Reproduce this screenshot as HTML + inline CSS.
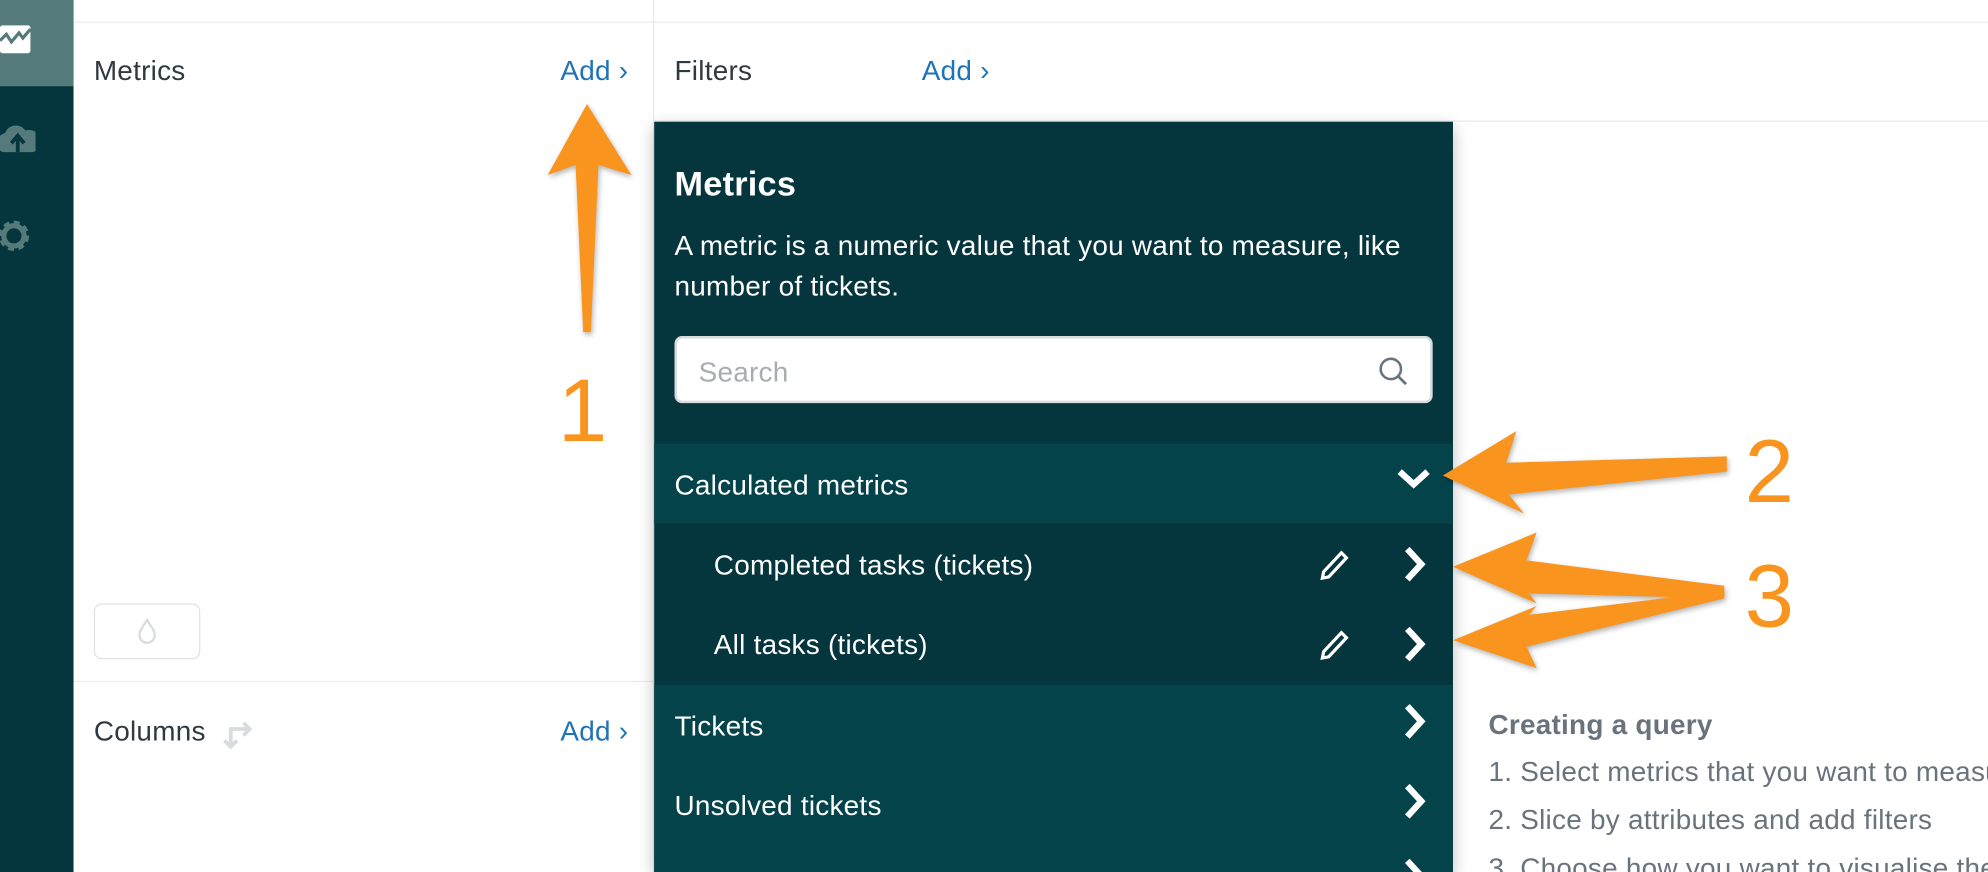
<!DOCTYPE html>
<html><head><meta charset="utf-8"><style>
html,body{margin:0;padding:0;width:1988px;height:872px;overflow:hidden;background:#fff}
#w{position:absolute;left:0;top:0;width:1568px;height:688px;transform:scale(1.26786);transform-origin:0 0;font-family:"Liberation Sans",sans-serif;overflow:hidden}
.a{position:absolute}
.t{position:absolute;white-space:nowrap;font-size:22px;line-height:24px;letter-spacing:0.2px}
.blue{color:#1f73b7}
.row{position:absolute;left:516px;width:630px}
</style></head><body><div id="w">
<div class="a" style="left:0;top:0;width:58px;height:688px;background:#05363d"></div>
<div class="a" style="left:0;top:0;width:58px;height:68px;background:#557a7b"></div>
<svg class="a" style="left:0;top:18px" width="26" height="26" viewBox="0 0 26 26"><rect x="0" y="2" width="24" height="22" rx="2" fill="#fff"/><path d="M0 14 L5 9 L9 15 L15 8 L18 12 L24 5" stroke="#557a7b" stroke-width="2.5" fill="none"/></svg>
<svg class="a" style="left:0;top:94px" width="28" height="28" viewBox="0 0 28 28"><path d="M2 26 A8 8 0 0 1 4 11 A9 9 0 0 1 20 9 A8 8 0 0 1 26 26 Z" fill="#557a7b"/><path d="M14 26 V14 M9 19 L14 13 L19 19" stroke="#05363d" stroke-width="3" fill="none"/></svg>
<svg class="a" style="left:0;top:172px" width="26" height="28" viewBox="0 0 26 28"><circle cx="11" cy="14" r="9" fill="none" stroke="#557a7b" stroke-width="6" stroke-dasharray="4 3"/><circle cx="11" cy="14" r="8" fill="none" stroke="#557a7b" stroke-width="4"/></svg>
<div class="a" style="left:58px;top:17px;width:1510px;height:1px;background:#e9ebed"></div>
<div class="a" style="left:515px;top:0;width:1px;height:688px;background:#e9ebed"></div>
<div class="t" style="left:74px;top:44px;color:#2f3941">Metrics</div>
<div class="t blue" style="left:442px;top:44px">Add ›</div>
<div class="a" style="left:74px;top:476px;width:84px;height:44px;border:1px solid #e0e3e5;border-radius:6px;box-sizing:border-box"></div>
<svg class="a" style="left:107px;top:487px" width="18" height="22" viewBox="0 0 18 22"><path d="M9 2 C12 7 15 10 15 14 A6 6 0 0 1 3 14 C3 10 6 7 9 2Z" fill="none" stroke="#d8dcde" stroke-width="1.8"/></svg>
<div class="a" style="left:58px;top:537px;width:457px;height:1px;background:#e9ebed"></div>
<div class="t" style="left:74px;top:565px;color:#2f3941">Columns</div>
<svg class="a" style="left:172px;top:563px" width="28" height="28" viewBox="0 0 28 28"><path d="M10 26 V12 H24 M20 7 L25 12 L20 17 M5 21 L10 26 L15 21" stroke="#d8dcde" stroke-width="3" fill="none"/></svg>
<div class="t blue" style="left:442px;top:565px">Add ›</div>
<div class="t" style="left:532px;top:44px;color:#2f3941">Filters</div>
<div class="t blue" style="left:727px;top:44px">Add ›</div>
<div class="a" style="left:516px;top:95px;width:1052px;height:1px;background:#e9ebed"></div>
<div class="t" style="left:1174px;top:560px;color:#68737d;font-weight:bold">Creating a query</div>
<div class="t" style="left:1174px;top:597px;color:#68737d">1. Select metrics that you want to measure</div>
<div class="t" style="left:1174px;top:635px;color:#68737d">2. Slice by attributes and add filters</div>
<div class="t" style="left:1174px;top:673px;color:#68737d">3. Choose how you want to visualise the</div>
<div class="a" style="left:516px;top:96px;width:630px;height:592px;background:#05363d;box-shadow:0 4px 12px rgba(0,0,0,.25)"></div>
<div class="t" style="left:532px;top:130px;color:#fff;font-size:27px;line-height:30px;font-weight:bold">Metrics</div>
<div class="t" style="left:532px;top:178px;color:#fff;line-height:32px">A metric is a numeric value that you want to measure, like<br>number of tickets.</div>
<div class="a" style="left:532px;top:265px;width:598px;height:53px;background:#fff;border:2px solid #d8dcde;border-radius:6px;box-sizing:border-box"></div>
<div class="t" style="left:551px;top:282px;color:#a8adb2">Search</div>
<svg class="a" style="left:1086px;top:280px" width="26" height="26" viewBox="0 0 26 26"><circle cx="11" cy="11" r="8" fill="none" stroke="#68737d" stroke-width="2"/><path d="M17 17 L23 23" stroke="#68737d" stroke-width="2.2"/></svg>
<div class="row" style="top:350px;height:63px;background:#05434b"></div>
<div class="row" style="top:540px;height:148px;background:#05434b"></div>
<div class="t" style="left:532px;top:371px;color:#fff">Calculated metrics</div>
<div class="t" style="left:563px;top:434px;color:#fff">Completed tasks (tickets)</div>
<div class="t" style="left:563px;top:497px;color:#fff">All tasks (tickets)</div>
<div class="t" style="left:532px;top:561px;color:#fff">Tickets</div>
<div class="t" style="left:532px;top:624px;color:#fff">Unsolved tickets</div>
<svg class="a" style="left:1100px;top:368px" width="30" height="20" viewBox="0 0 30 20"><path d="M4 4 L15 14 L26 4" stroke="#fff" stroke-width="5" fill="none"/></svg>
<svg class="a" style="left:1104px;top:430px" width="24" height="30" viewBox="0 0 24 30"><path d="M6 3 L17 15 L6 27" stroke="#fff" stroke-width="5" fill="none"/></svg>
<svg class="a" style="left:1104px;top:493px" width="24" height="30" viewBox="0 0 24 30"><path d="M6 3 L17 15 L6 27" stroke="#fff" stroke-width="5" fill="none"/></svg>
<svg class="a" style="left:1104px;top:554px" width="24" height="30" viewBox="0 0 24 30"><path d="M6 3 L17 15 L6 27" stroke="#fff" stroke-width="5" fill="none"/></svg>
<svg class="a" style="left:1104px;top:617px" width="24" height="30" viewBox="0 0 24 30"><path d="M6 3 L17 15 L6 27" stroke="#fff" stroke-width="5" fill="none"/></svg>
<svg class="a" style="left:1104px;top:676px" width="24" height="30" viewBox="0 0 24 30"><path d="M6 3 L17 15 L6 27" stroke="#fff" stroke-width="5" fill="none"/></svg>
<svg class="a" style="left:1040px;top:433px" width="24" height="26" viewBox="0 0 24 26"><path d="M18 3 L22 7 L8 22 L3 23 L4 18 Z" fill="none" stroke="#fff" stroke-width="2.5"/></svg>
<svg class="a" style="left:1040px;top:496px" width="24" height="26" viewBox="0 0 24 26"><path d="M18 3 L22 7 L8 22 L3 23 L4 18 Z" fill="none" stroke="#fff" stroke-width="2.5"/></svg>
<svg class="a" style="left:0;top:0" width="1568" height="688" viewBox="0 0 1568 688">
<g fill="#f9941e" style="filter:drop-shadow(1px 2px 2px rgba(0,0,0,.3))">
<path d="M463 82 L498 138 L472 130 L466 262 L460 262 L454 130 L432 138 Z"/>
<path d="M1138 375 L1196 340 L1188 365 L1362 360 L1362 372 L1190 390 L1202 405 Z"/>
<path d="M1146 447 L1212 420 L1204 442 L1360 462 L1360 472 L1206 468 L1212 476 Z"/>
<path d="M1146 505 L1212 478 L1206 485 L1360 466 L1360 472 L1204 510 L1212 527 Z"/>
</g>
<g fill="#f9941e" font-family="Liberation Sans, sans-serif" font-size="70">
<text x="440" y="348">1</text>
<text x="1376" y="396">2</text>
<text x="1376" y="494">3</text>
</g>
</svg>
</div></body></html>
